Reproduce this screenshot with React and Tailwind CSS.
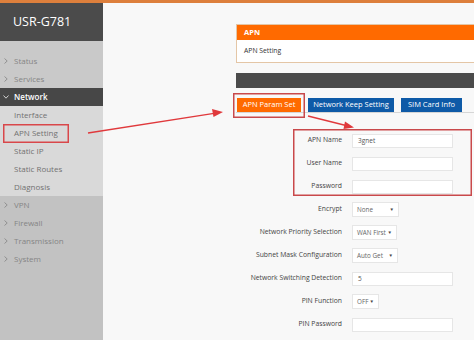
import React from "react";

const font = { fontFamily: '"Open Sans", "Noto Sans", sans-serif' };

function Chevron({ down, color = "#8a8a8a" }) {
  return (
    <svg width="6" height="6" viewBox="0 0 6 6" className="shrink-0">
      {down ? (
        <path d="M0.5 1.5 L3 4.2 L5.5 1.5" fill="none" stroke={color} strokeWidth="0.9" />
      ) : (
        <path d="M1.5 0.5 L4.2 3 L1.5 5.5" fill="none" stroke={color} strokeWidth="0.9" />
      )}
    </svg>
  );
}

function NavItem({ label }) {
  return (
    <div className="h-[18px] flex items-center pl-[3px] gap-[5px] text-[8px] text-[#858585]">
      <Chevron />
      <span>{label}</span>
    </div>
  );
}

function SubItem({ label }) {
  return (
    <div className="h-[18px] flex items-center pl-[14px] text-[8px] text-[#727272]">
      {label}
    </div>
  );
}

function Input({ value }) {
  return (
    <div className="w-[101px] h-[14px] bg-white border border-[#e6e6e6] flex items-center pl-[5px] text-[6.5px] text-[#555]">
      {value}
    </div>
  );
}

function Select({ value, w }) {
  return (
    <div className={`${w} h-[15px] bg-white border border-[#e6e6e6] flex items-center justify-between pl-[4px] pr-[4px] text-[6.3px] text-[#666] whitespace-nowrap`}>
      <span>{value}</span>
      <span className="text-[4.5px] text-[#444]">▼</span>
    </div>
  );
}

function Row({ label, children }) {
  return (
    <div className="h-[23px] flex items-center">
      <div className="w-[106px] text-right text-[6.8px] text-[#444] whitespace-nowrap">{label}</div>
      <div className="ml-[10px]">{children}</div>
    </div>
  );
}

export default function App() {
  return (
    <div className="w-[474px] h-[340px] overflow-hidden relative flex flex-col bg-[#f8f8f8]" style={font}>
      <div className="h-[3px] bg-[#dd7f3c] shrink-0" />
      <div className="flex flex-1 min-h-0">
        {/* Sidebar */}
        <div className="w-[103px] shrink-0 flex flex-col bg-[#c1c1c1]">
          <div className="h-[38px] bg-[#4b4b4b] flex items-center pl-[13px] text-white text-[12.5px]">
            USR-G781
          </div>
          <div className="bg-[#c9c9c9] pt-[11px]">
            <NavItem label="Status" />
            <NavItem label="Services" />
          </div>
          <div className="h-[18px] bg-[#474747] flex items-center pl-[3px] gap-[5px] text-[8px] text-white font-semibold">
            <Chevron down color="#e0e0e0" />
            <span>Network</span>
          </div>
          <div className="bg-[#d9d9d9]">
            <SubItem label="Interface" />
            <SubItem label="APN Setting" />
            <SubItem label="Static IP" />
            <SubItem label="Static Routes" />
            <SubItem label="Diagnosis" />
          </div>
          <div className="flex-1 bg-[#c2c2c2]">
            <NavItem label="VPN" />
            <NavItem label="Firewall" />
            <NavItem label="Transmission" />
            <NavItem label="System" />
          </div>
        </div>

        {/* Main */}
        <div className="flex-1 min-w-0 overflow-hidden pl-[133px] pt-[21px] flex flex-col">
          <div className="w-[300px] border border-[#e4c6a6]">
            <div className="h-[15px] bg-[#ff6a00] flex items-center pl-[7px] text-white text-[7.5px] font-bold">APN</div>
            <div className="h-[22px] bg-white flex items-center pl-[7px] text-[6.8px] text-[#333]">APN Setting</div>
          </div>
          <div className="w-[300px] h-[15px] bg-[#4b4b4b] mt-[10px]" />
          <div className="mt-[10px] w-[300px] flex items-end gap-[7px] pl-[1px] border-b border-[#d6d6d6] h-[15px]">
            <div className="w-[64px] h-[14px] bg-[#ff6a00] text-white text-[7.5px] flex items-center justify-center whitespace-nowrap">APN Param Set</div>
            <div className="w-[86px] h-[14px] bg-[#0e5aa7] text-white text-[7.5px] flex items-center justify-center whitespace-nowrap">Network Keep Setting</div>
            <div className="w-[61px] h-[14px] bg-[#0e5aa7] text-white text-[7.5px] flex items-center justify-center whitespace-nowrap">SIM Card Info</div>
          </div>
          <div className="mt-[16px] flex flex-col">
            <Row label="APN Name"><Input value="3gnet" /></Row>
            <Row label="User Name"><Input value="" /></Row>
            <Row label="Password"><Input value="" /></Row>
            <Row label="Encrypt"><Select value="None" w="w-[47px]" /></Row>
            <Row label="Network Priority Selection"><Select value="WAN First" w="w-[45px]" /></Row>
            <Row label="Subnet Mask Configuration"><Select value="Auto Get" w="w-[46px]" /></Row>
            <Row label="Network Switching Detection"><Input value="5" /></Row>
            <Row label="PIN Function"><Select value="OFF" w="w-[27px]" /></Row>
            <Row label="PIN Password"><Input value="" /></Row>
          </div>
        </div>
      </div>

      {/* Annotations */}
      <svg className="absolute left-0 top-0 pointer-events-none" width="474" height="340">
        <rect x="3.75" y="124.75" width="64.5" height="17.5" fill="none" stroke="#d9474a" strokeWidth="1.5" />
        <rect x="233.75" y="93.75" width="70.5" height="23.5" fill="none" stroke="#c9494b" strokeWidth="1.5" />
        <rect x="293.75" y="129.75" width="177.5" height="65.5" fill="none" stroke="#c9494b" strokeWidth="1.5" />
        <line x1="88" y1="133" x2="214" y2="113.3" stroke="#e0393c" strokeWidth="1.3" />
        <polygon points="223,112 212,109 213.5,117" fill="#e0393c" />
        <line x1="308" y1="116" x2="346" y2="125.5" stroke="#e0393c" strokeWidth="1.3" />
        <polygon points="354,127.5 345,121.5 343.5,129" fill="#e0393c" />
      </svg>
    </div>
  );
}
